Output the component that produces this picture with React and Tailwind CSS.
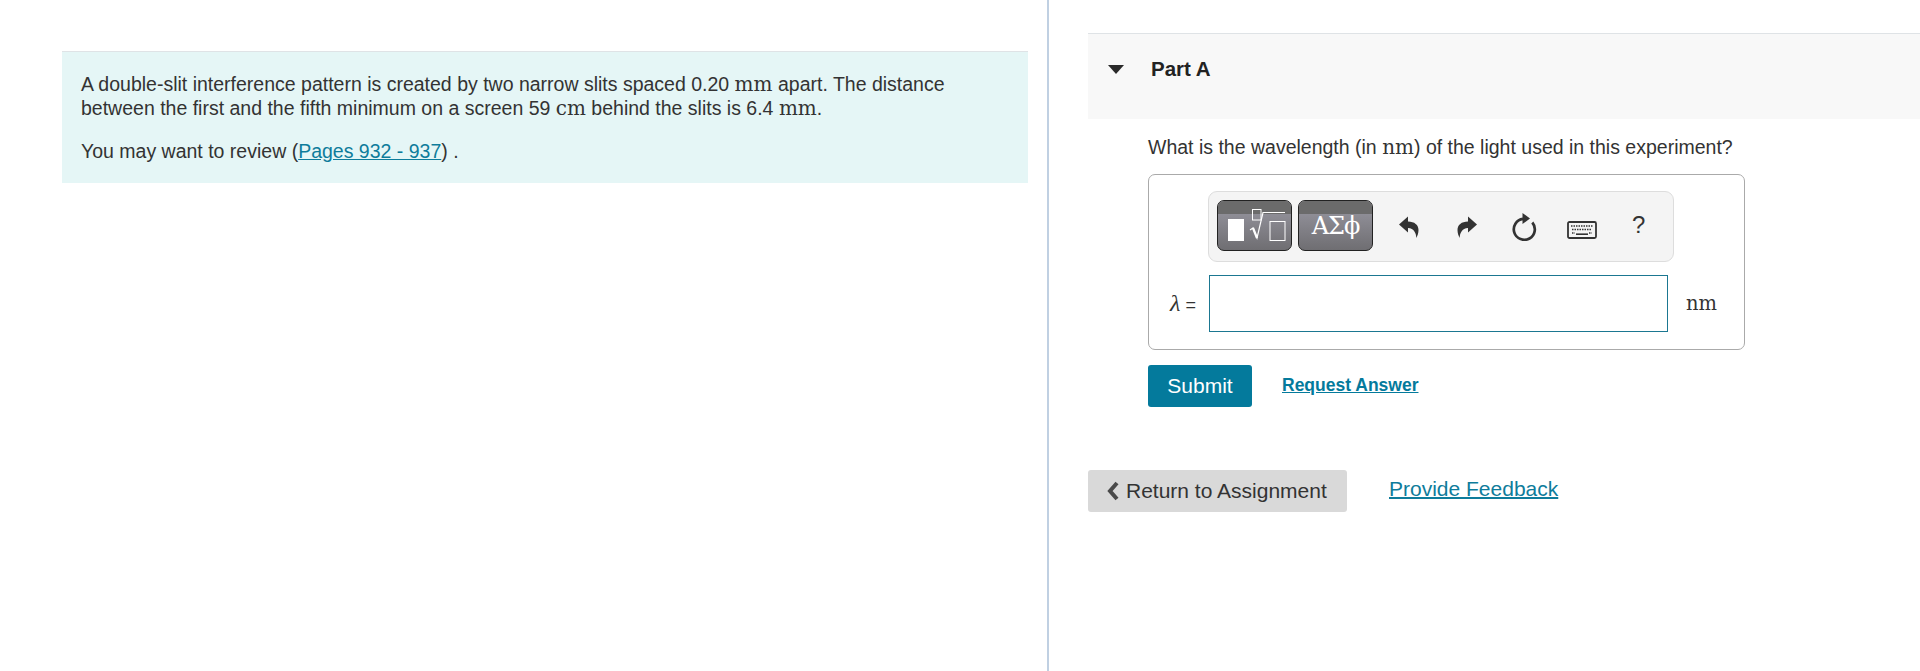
const sans = { fontFamily: '"Liberation Sans", Arial, sans-serif' }

function M({ children }) {
  return <span className="font-['DejaVu_Serif',serif] text-[20px] leading-[20px]">{children}</span>
}

function BotonPlantilla({ children }) {
  return (
    <div className="relative w-[75px] h-[51px] rounded-[7px] border border-[#222] overflow-hidden bg-gradient-to-b from-[#9a99a3] to-[#6f6e72]">
      <div className="absolute inset-x-0 top-0 h-[13px] bg-[#6b6b6b]" />
      {children}
    </div>
  )
}

function Deshacer({ flip }) {
  return (
    <svg width="20" height="24" viewBox="0 0 20 24" className={flip ? '-scale-x-100' : ''}>
      <path d="M0 9.5 L9 1.5 V6.5 C15.5 6.5 19.5 10 19.5 15 C19.5 18 18.5 21 17.2 23 C17.4 18.5 15 13.2 9 13 V17.5 Z" fill="#333" />
    </svg>
  )
}

export default function App() {
  return (
    <div className="flex w-[1920px] h-[671px] bg-white text-[#333] text-[19.5px] leading-[24px] overflow-hidden" style={sans}>
      {/* Enunciado */}
      <div className="w-[1047px] shrink-0 pt-[51px] pl-[62px] pr-[19px]">
        <div className="bg-[#e5f6f6] border-t border-[#dfe3e6] h-[132px] pl-[19px] pr-[60px] pt-[20px]">
          <p className="whitespace-nowrap">A double-slit interference pattern is created by two narrow slits spaced 0.20 <M>mm</M> apart. The distance</p>
          <p className="whitespace-nowrap">between the first and the fifth minimum on a screen 59 <M>cm</M> behind the slits is 6.4 <M>mm</M>.</p>
          <p className="mt-[19px]">
            You may want to review (<a href="#" className="text-[#0e7c9b] underline">Pages 932 - 937</a>) .
          </p>
        </div>
      </div>

      <div className="w-[2px] shrink-0 bg-[#c0d0e2]" />

      {/* Parte A */}
      <div className="flex-1 pt-[33px] pl-[39px]">
        <div className="h-[86px] bg-[#f8f8f8] border-t border-[#dfe3e6] flex pl-[20px] pt-[23px]">
          <svg width="16" height="9" viewBox="0 0 16 9" className="mt-[8px]">
            <path d="M0 0 H16 L8 9 Z" fill="#2a2a2a" />
          </svg>
          <span className="ml-[27px] font-bold text-[20.5px] text-[#222]">Part A</span>
        </div>

        <div className="pl-[60px]">
          <p className="mt-[16px]">What is the wavelength (in <M>nm</M>) of the light used in this experiment?</p>

          <div className="mt-[15px] w-[597px] h-[176px] border border-[#aaa] rounded-[7px] pt-[16px] pl-[59px]">
            <div className="w-[466px] h-[71px] bg-[#f4f4f4] border border-[#ddd] rounded-[9px] flex items-center pl-[8px]">
              <div className="-mt-[2px]">
                <BotonPlantilla>
                  <div className="absolute left-[10px] top-[18px] w-[16px] h-[22px] bg-white" />
                  <svg width="38" height="42" viewBox="0 0 38 42" className="absolute left-[31px] top-[7px]">
                    <rect x="3.5" y="1.5" width="8.5" height="10.5" fill="none" stroke="#fff" strokeWidth="1" />
                    <path d="M1 22 L4 20 L8 30 L14 4.5 H36" fill="none" stroke="#fff" strokeWidth="1.2" />
                    <path d="M4 20 L8 30" fill="none" stroke="#fff" strokeWidth="2.2" />
                    <rect x="21" y="13.5" width="15" height="19" fill="none" stroke="#fff" strokeWidth="1" />
                  </svg>
                </BotonPlantilla>
              </div>
              <div className="ml-[6px] -mt-[2px]">
                <BotonPlantilla>
                  <span className="absolute inset-x-0 top-[13px] text-center text-white text-[24px] font-['DejaVu_Serif',serif] tracking-[-1px]">ΑΣϕ</span>
                </BotonPlantilla>
              </div>
              <div className="ml-[26px]"><Deshacer /></div>
              <div className="ml-[38px]"><Deshacer flip /></div>
              <svg width="26" height="28" viewBox="0 0 26 28" className="ml-[35px]">
                <path d="M11 5.9 A10.5 10.5 0 1 0 20.3 9.5" fill="none" stroke="#333" strokeWidth="2.7" />
                <path d="M10.5 0 L18 5.5 L10.5 11 Z" fill="#333" />
              </svg>
              <svg width="30" height="18" viewBox="0 0 30 18" className="ml-[29px] mt-[6px]">
                <rect x="1" y="1" width="28" height="16" rx="1.5" fill="none" stroke="#333" strokeWidth="1.8" />
                <path d="M4 5 H26 M5 8.5 H25 M5 12 H8 M22 12 H25" stroke="#333" strokeWidth="1.6" strokeDasharray="1.5 1" />
                <path d="M9 13.2 H21" stroke="#333" strokeWidth="1.6" />
              </svg>
              <span className="ml-[35px] text-[24px] text-[#333] -mt-[4px]">?</span>
            </div>

            <div className="flex items-center mt-[13px] -ml-[59px]">
              <span className="w-[60px] text-right pr-[13px] text-[18px] whitespace-nowrap"><i className="text-[24px] font-['Liberation_Serif',serif]">λ</i> =</span>
              <div className="w-[459px] h-[57px] border border-[#1b7791] bg-white" />
              <span className="ml-[18px] font-['DejaVu_Serif',serif] text-[19.5px]">nm</span>
            </div>
          </div>

          <div className="flex items-center mt-[15px]">
            <button className="w-[104px] h-[42px] bg-[#047a9c] text-white text-[21px] rounded-[3px]">Submit</button>
            <a href="#" className="ml-[30px] text-[#047a9c] font-bold underline text-[17.5px] -mt-[2px]">Request Answer</a>
          </div>
        </div>

        <div className="flex items-start mt-[63px]">
          <button className="w-[259px] h-[42px] bg-[#d9d9d9] rounded-[3px] flex items-center pl-[19px] text-[21px] text-[#333]">
            <svg width="13" height="20" viewBox="0 0 13 20" className="mr-[6px]">
              <path d="M10 2 L3 10 L10 18" fill="none" stroke="#4a4a4a" strokeWidth="4" />
            </svg>
            Return to Assignment
          </button>
          <a href="#" className="ml-[42px] mt-[7px] text-[21px] text-[#0e7c9b] underline decoration-2">Provide Feedback</a>
        </div>
      </div>
    </div>
  )
}
